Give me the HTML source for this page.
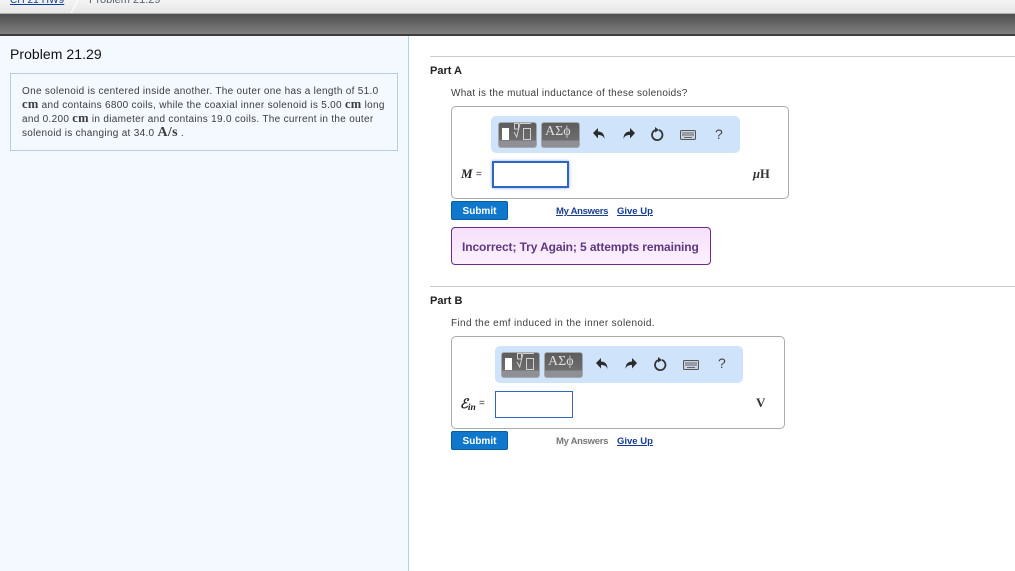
<!DOCTYPE html>
<html><head><meta charset="utf-8"><style>
html,body{margin:0;padding:0;background:#fff}
body{width:1015px;height:571px;overflow:hidden;position:relative;font-family:"Liberation Sans",sans-serif;color:#333}
.a{position:absolute;white-space:nowrap}
.s{font-family:"Liberation Serif",serif}
.box{position:absolute;background:#fff;border:1px solid #aaa;border-radius:5px;box-sizing:border-box}
.tb{position:absolute;width:249px;height:37px;background:#cfe4fb;border-radius:5px}
.b{position:absolute;top:6px;width:39px;height:26px;border-radius:3px;background:linear-gradient(#5c5c5c,#6e6e6e 72%,#8f8f96 74%,#8f8f96);box-sizing:border-box;border:1px solid #a5a9ad}
.sub{position:absolute;width:57px;height:19px;background:#0f78cc;border:1px solid #0b5c9e;border-radius:2px;box-sizing:border-box;color:#fff;font-size:10px;font-weight:bold;text-align:center;line-height:19px}
.l{font-size:9.5px;font-weight:bold}
.t{font-size:10px;letter-spacing:.3px;color:#3c3c3c;line-height:12px}
.t b{font-size:12.5px;line-height:0;letter-spacing:.3px}
</style></head><body>
<div class="a" style="left:0;top:0;width:1015px;height:13px;background:linear-gradient(#f4f4f4,#e6e6e6)"></div>
<div class="a" style="left:0;top:13px;width:1015px;height:1px;background:#b0b0b0"></div>
<svg class="a" style="left:68px;top:0" width="12" height="13"><path d="M10 0L3 13" stroke="#fafafa" stroke-width="1.500"/></svg>
<div class="a" style="left:10px;top:-5px;font-size:10px;letter-spacing:.1px;color:#0b3d9e;text-decoration:underline">CH 21 HW9</div>
<div class="a" style="left:89px;top:-6px;font-size:11px;color:#5a6470">Problem 21.29</div>
<div class="a" style="left:0;top:14px;width:1015px;height:20px;background:linear-gradient(#4f4f4f,#808080)"></div>
<div class="a" style="left:0;top:34px;width:1015px;height:2px;background:#3d3d3d"></div>

<div class="a" style="left:0;top:36px;width:408px;height:535px;background:#f4f9ff;border-right:1px solid #b6d0e4"></div>
<div class="a" style="left:10px;top:46px;font-size:14px;letter-spacing:.05px;color:#111">Problem 21.29</div>
<div class="a" style="left:10px;top:73px;width:388px;height:78px;box-sizing:border-box;border:1px solid #b6cfe0"></div>
<div class="a t" style="left:22px;top:86px">One solenoid is centered inside another. The outer one has a length of 51.0</div>
<div class="a t" style="left:22px;top:100px"><b class="s">cm</b> and contains 6800 coils, while the coaxial inner solenoid is 5.00 <b class="s">cm</b> long</div>
<div class="a t" style="left:22px;top:114px">and 0.200 <b class="s">cm</b> in diameter and contains 19.0 coils. The current in the outer</div>
<div class="a t" style="left:22px;top:128px">solenoid is changing at 34.0 <b class="s" style="font-size:14px">A/s</b> .</div>

<div class="a" style="left:430px;top:56px;width:585px;height:1px;background:#ccc"></div>
<div class="a" style="left:430px;top:65px;font-size:11px;font-weight:bold;color:#222">Part A</div>
<div class="a t" style="left:451px;top:88px;letter-spacing:.28px">What is the mutual inductance of these solenoids?</div>

<div class="box" style="left:451px;top:106px;width:338px;height:93px"></div>
<div class="tb" style="left:491px;top:116px">
 <div class="b" style="left:7px"><div class="a" style="left:3px;top:5px;width:7px;height:12px;background:#fff"></div><svg class="a" style="left:13px;top:0" width="24" height="18" fill="none" stroke="#d0d0d0"><rect x="2.500" y=".5" width="4" height="5.500"/><path d="M2 9L4.700 14 8 .5H19"/><rect x="11.500" y="5.500" width="7" height="11"/></svg></div>
 <div class="b" style="left:50px"><div class="a s" style="left:3px;top:1px;font-size:14px;color:#ddd">ΑΣϕ</div></div>
 <svg class="a" style="left:101px;top:11px" width="14" height="14"><path d="M1 6l5-5v3.500c4 0 6.500 2.500 6.500 7.500-1-3-3-4-6.500-4v3.500z" fill="#2c2c2c"/></svg>
 <svg class="a" style="left:131px;top:11px" width="14" height="14"><path d="M13 6L8 1v3.500c-4 0-6.500 2.500-6.500 7.500 1-3 3-4 6.500-4v3.500z" fill="#2c2c2c"/></svg>
 <svg class="a" style="left:159px;top:10px" width="15" height="16" fill="none"><path d="M9 4a5.200 5.200 0 1 1-4 .2" stroke="#333" stroke-width="1.800"/><path d="M5 1l4 3-4 2.500z" fill="#333"/></svg>
 <svg class="a" style="left:189px;top:14px" width="16" height="10"><rect x=".5" y=".5" width="15" height="9" rx="1" fill="#c8d2dc" stroke="#555"/><path d="M2 3h12M2 5h12M4 7.500h8" stroke="#667"/></svg>
 <div class="a" style="left:224px;top:10px;font-size:14px;color:#444">?</div>
</div>
<div class="a s" style="left:461px;top:166px;font-size:13px;font-weight:bold;font-style:italic;color:#222">M</div>
<div class="a" style="left:476px;top:169px;font-size:10px;color:#333">=</div>
<div class="a" style="left:492px;top:161px;width:77px;height:27px;box-sizing:border-box;background:#fff;border:2px solid #2f66c0;box-shadow:0 0 3px #7ea6e8"></div>
<div class="a s" style="left:753px;top:167px;font-size:12.500px;font-weight:bold;color:#333"><i>μ</i>H</div>
<div class="sub" style="left:451px;top:201px">Submit</div>
<div class="a l" style="left:556px;top:206px;letter-spacing:-.3px;color:#1d3f8f;text-decoration:underline">My Answers</div>
<div class="a l" style="left:617px;top:206px;color:#123a94;text-decoration:underline">Give Up</div>

<div class="a" style="left:451px;top:227px;width:260px;height:38px;box-sizing:border-box;border:1px solid #6a2c8a;border-radius:4px;background:linear-gradient(#f5e0fb,#fdf0ff)"></div>
<div class="a" style="left:462px;top:240px;font-size:12px;font-weight:bold;letter-spacing:-.1px;color:#5b3a80">Incorrect; Try Again; 5 attempts remaining</div>

<div class="a" style="left:430px;top:286px;width:585px;height:1px;background:#ccc"></div>
<div class="a" style="left:430px;top:295px;font-size:11px;font-weight:bold;color:#222">Part B</div>
<div class="a t" style="left:451px;top:318px;letter-spacing:.36px">Find the emf induced in the inner solenoid.</div>

<div class="box" style="left:451px;top:336px;width:334px;height:93px"></div>
<div class="tb" style="left:495px;top:346px;width:248px">
 <div class="b" style="left:6px"><div class="a" style="left:3px;top:5px;width:7px;height:12px;background:#fff"></div><svg class="a" style="left:13px;top:0" width="24" height="18" fill="none" stroke="#d0d0d0"><rect x="2.500" y=".5" width="4" height="5.500"/><path d="M2 9L4.700 14 8 .5H19"/><rect x="11.500" y="5.500" width="7" height="11"/></svg></div>
 <div class="b" style="left:49px"><div class="a s" style="left:3px;top:1px;font-size:14px;color:#ddd">ΑΣϕ</div></div>
 <svg class="a" style="left:100px;top:11px" width="14" height="14"><path d="M1 6l5-5v3.500c4 0 6.500 2.500 6.500 7.500-1-3-3-4-6.500-4v3.500z" fill="#2c2c2c"/></svg>
 <svg class="a" style="left:129px;top:11px" width="14" height="14"><path d="M13 6L8 1v3.500c-4 0-6.500 2.500-6.500 7.500 1-3 3-4 6.500-4v3.500z" fill="#2c2c2c"/></svg>
 <svg class="a" style="left:158px;top:10px" width="15" height="16" fill="none"><path d="M9 4a5.200 5.200 0 1 1-4 .2" stroke="#333" stroke-width="1.800"/><path d="M5 1l4 3-4 2.500z" fill="#333"/></svg>
 <svg class="a" style="left:188px;top:14px" width="16" height="10"><rect x=".5" y=".5" width="15" height="9" rx="1" fill="#c8d2dc" stroke="#555"/><path d="M2 3h12M2 5h12M4 7.500h8" stroke="#667"/></svg>
 <div class="a" style="left:223px;top:9px;font-size:14px;color:#444">?</div>
</div>
<div class="a s" style="left:460px;top:396px;font-size:13px;font-style:italic;font-weight:bold;color:#222">ℰ<span style="font-size:9.500px;position:relative;top:2px">in</span></div>
<div class="a" style="left:479px;top:398px;font-size:10px;color:#333">=</div>
<div class="a" style="left:495px;top:391px;width:78px;height:27px;box-sizing:border-box;background:#fff;border:1px solid #2f66c0"></div>
<div class="a s" style="left:756px;top:395px;font-size:13px;font-weight:bold;color:#333">V</div>
<div class="sub" style="left:451px;top:431px">Submit</div>
<div class="a l" style="left:556px;top:436px;letter-spacing:-.3px;color:#777">My Answers</div>
<div class="a l" style="left:617px;top:436px;color:#123a94;text-decoration:underline">Give Up</div>
</body></html>
